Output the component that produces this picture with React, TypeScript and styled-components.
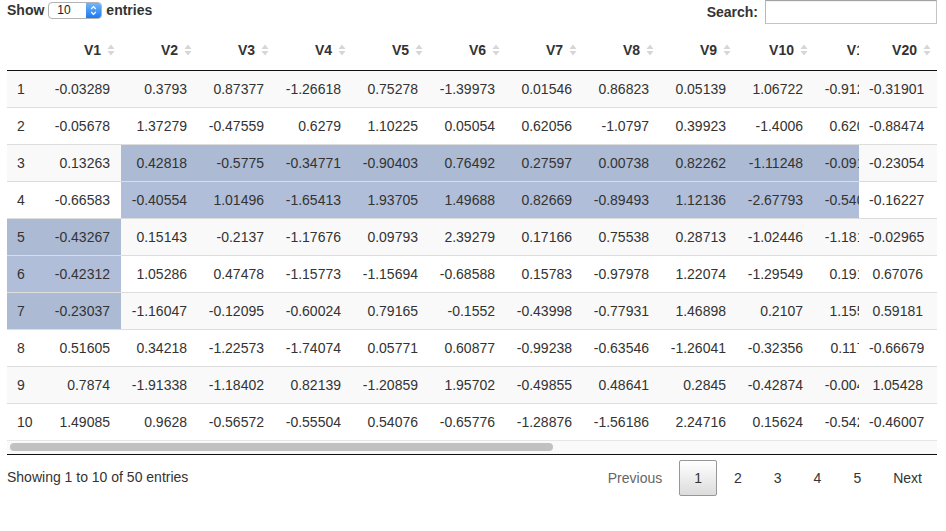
import React from "react";
import styled, { createGlobalStyle } from "styled-components";

const GlobalStyle = createGlobalStyle`
  html, body { margin: 0; padding: 0; background: #fff; }
  body {
    font-family: "Liberation Sans", Arial, Helvetica, sans-serif;
    font-size: 14px;
    line-height: 20px;
    color: #333;
  }
  * { box-sizing: border-box; }
`;

const Page = styled.div`
  width: 946px;
  padding: 0 9px 0 7px;
`;

const Controls = styled.div`
  display: flex;
  justify-content: space-between;
  align-items: flex-start;
  height: 24px;
  margin-bottom: 6px;
`;

const LengthLabel = styled.label`
  display: flex;
  align-items: center;
  gap: 4px;
  height: 20px;
  font-weight: bold;
`;

const SelectBox = styled.div`
  display: flex;
  width: 54px;
  height: 17px;
  border: 1px solid #b3b3b3;
  border-radius: 4px;
  overflow: hidden;
  background: #fff;
  font-weight: normal;
  font-size: 12px;
  line-height: 15px;
  color: #222;
`;

const SelectValue = styled.span`
  flex: 1;
  padding-left: 8px;
`;

const SelectStepper = styled.span`
  width: 15px;
  display: flex;
  align-items: center;
  justify-content: center;
  background: linear-gradient(#72b6fb, #1e78ef);
`;

const SearchLabel = styled.label`
  display: flex;
  align-items: center;
  gap: 7px;
  font-weight: bold;
`;

const SearchInput = styled.input`
  width: 172px;
  height: 24px;
  margin: 0;
  border: 1px solid #c4c4c4;
  border-top-color: #a3a3a3;
  border-left-color: #b8b8b8;
  box-shadow: inset 0 1px 1px rgba(0, 0, 0, 0.06);
  background: #fff;
  outline: none;
  font: inherit;
`;

const ScrollWrap = styled.div`
  border-bottom: 1px solid #111;
`;

const Panes = styled.div`
  display: flex;
`;

const Viewport = styled.div`
  flex: 1;
  min-width: 0;
  overflow: hidden;
`;

const FixedPane = styled.div`
  flex: none;
  width: 78px;
  background: #fff;
`;

const Table = styled.table<{ $width: number }>`
  width: ${(p) => p.$width}px;
  table-layout: fixed;
  border-collapse: separate;
  border-spacing: 0;
  tbody tr:first-child > td {
    border-top: none;
  }
`;

const HeadCell = styled.th<{ $w: number }>`
  width: ${(p) => p.$w}px;
  padding: 10px 6px 10px 10px;
  border-bottom: 1px solid #111;
  font-weight: bold;
  white-space: nowrap;
  overflow: hidden;
  background: #fff;
`;

const HeadInner = styled.div`
  display: flex;
  justify-content: flex-end;
  align-items: center;
  gap: 6px;
`;

const Cell = styled.td<{ $sel: boolean; $odd: boolean; $left?: boolean; $padR: number }>`
  padding: 8px ${(p) => p.$padR}px 8px 10px;
  border-top: 1px solid #ddd;
  text-align: ${(p) => (p.$left ? "left" : "right")};
  white-space: nowrap;
  overflow: hidden;
  background: ${(p) =>
    p.$sel ? (p.$odd ? "#acbad4" : "#b0bed9") : p.$odd ? "#f9f9f9" : "#fff"};
`;

const Track = styled.div`
  height: 14px;
  border-top: 1px solid #e6e6e6;
  background: #fafafa;
  padding: 2px 0 0 3px;
`;

const Thumb = styled.div`
  width: 543px;
  height: 8px;
  border-radius: 4px;
  background: #c1c1c1;
`;

const Footer = styled.div`
  display: flex;
  justify-content: space-between;
  align-items: flex-start;
`;

const Info = styled.div`
  padding-top: 12px;
`;

const Pagination = styled.div`
  display: flex;
  padding-top: 5px;
`;

const PageButton = styled.span<{ $current?: boolean; $disabled?: boolean }>`
  display: inline-block;
  padding: 7px 14px;
  margin-left: 2px;
  border: 1px solid ${(p) => (p.$current ? "#979797" : "transparent")};
  border-radius: 2px;
  line-height: 20px;
  color: ${(p) => (p.$disabled ? "#666" : "#333")};
  background: ${(p) =>
    p.$current ? "linear-gradient(to bottom, #fff 0%, #dcdcdc 100%)" : "transparent"};
`;

const SortIcon = () => (
  <svg width="8" height="12" viewBox="0 0 8 12">
    <path d="M4 0.5 L7.5 5 H0.5 Z" fill="#d6d6d6" />
    <path d="M4 11.5 L0.5 7 H7.5 Z" fill="#d6d6d6" />
  </svg>
);

const Chevrons = () => (
  <svg width="7" height="11" viewBox="0 0 7 11">
    <path d="M1.2 4 L3.5 1.6 L5.8 4" stroke="#fff" strokeWidth="1.3" fill="none" />
    <path d="M1.2 7 L3.5 9.4 L5.8 7" stroke="#fff" strokeWidth="1.3" fill="none" />
  </svg>
);

const data: string[][] = [
  ["-0.03289", "0.3793", "0.87377", "-1.26618", "0.75278", "-1.39973", "0.01546", "0.86823", "0.05139", "1.06722", "-0.91247", "-0.31901"],
  ["-0.05678", "1.37279", "-0.47559", "0.6279", "1.10225", "0.05054", "0.62056", "-1.0797", "0.39923", "-1.4006", "0.62031", "-0.88474"],
  ["0.13263", "0.42818", "-0.5775", "-0.34771", "-0.90403", "0.76492", "0.27597", "0.00738", "0.82262", "-1.11248", "-0.09172", "-0.23054"],
  ["-0.66583", "-0.40554", "1.01496", "-1.65413", "1.93705", "1.49688", "0.82669", "-0.89493", "1.12136", "-2.67793", "-0.54012", "-0.16227"],
  ["-0.43267", "0.15143", "-0.2137", "-1.17676", "0.09793", "2.39279", "0.17166", "0.75538", "0.28713", "-1.02446", "-1.18126", "-0.02965"],
  ["-0.42312", "1.05286", "0.47478", "-1.15773", "-1.15694", "-0.68588", "0.15783", "-0.97978", "1.22074", "-1.29549", "0.19133", "0.67076"],
  ["-0.23037", "-1.16047", "-0.12095", "-0.60024", "0.79165", "-0.1552", "-0.43998", "-0.77931", "1.46898", "0.2107", "1.15524", "0.59181"],
  ["0.51605", "0.34218", "-1.22573", "-1.74074", "0.05771", "0.60877", "-0.99238", "-0.63546", "-1.26041", "-0.32356", "0.11741", "-0.66679"],
  ["0.7874", "-1.91338", "-1.18402", "0.82139", "-1.20859", "1.95702", "-0.49855", "0.48641", "0.2845", "-0.42874", "-0.00431", "1.05428"],
  ["1.49085", "0.9628", "-0.56572", "-0.55504", "0.54076", "-0.65776", "-1.28876", "-1.56186", "2.24716", "0.15624", "-0.54237", "-0.46007"],
];

const scrollCols = ["V1", "V2", "V3", "V4", "V5", "V6", "V7", "V8", "V9", "V10", "V11"];

// column index: 0 = row names, 1..11 = V1..V11
const isSelected = (row: number, col: number) => {
  if (row === 2 || row === 3) return col >= 2;
  if (row >= 4 && row <= 6) return col <= 1;
  return false;
};

export default function App() {
  const mainWidth = 37 + scrollCols.length * 77;
  return (
    <Page>
      <GlobalStyle />
      <Controls>
        <LengthLabel>
          Show
          <SelectBox>
            <SelectValue>10</SelectValue>
            <SelectStepper>
              <Chevrons />
            </SelectStepper>
          </SelectBox>
          entries
        </LengthLabel>
        <SearchLabel>
          Search:
          <SearchInput type="search" />
        </SearchLabel>
      </Controls>

      <ScrollWrap>
        <Panes>
          <Viewport>
            <Table $width={mainWidth}>
              <thead>
                <tr>
                  <HeadCell $w={37} />
                  {scrollCols.map((c) => (
                    <HeadCell key={c} $w={77}>
                      <HeadInner>
                        <span>{c}</span>
                        <SortIcon />
                      </HeadInner>
                    </HeadCell>
                  ))}
                </tr>
              </thead>
              <tbody>
                {data.map((row, r) => (
                  <tr key={r}>
                    <Cell $left $padR={10} $odd={r % 2 === 0} $sel={isSelected(r, 0)}>
                      {r + 1}
                    </Cell>
                    {row.slice(0, 11).map((v, c) => (
                      <Cell key={c} $padR={11} $odd={r % 2 === 0} $sel={isSelected(r, c + 1)}>
                        {v}
                      </Cell>
                    ))}
                  </tr>
                ))}
              </tbody>
            </Table>
          </Viewport>
          <FixedPane>
            <Table $width={78}>
              <thead>
                <tr>
                  <HeadCell $w={78}>
                    <HeadInner>
                      <span>V20</span>
                      <SortIcon />
                    </HeadInner>
                  </HeadCell>
                </tr>
              </thead>
              <tbody>
                {data.map((row, r) => (
                  <tr key={r}>
                    <Cell $padR={14} $odd={r % 2 === 0} $sel={false}>
                      {row[11]}
                    </Cell>
                  </tr>
                ))}
              </tbody>
            </Table>
          </FixedPane>
        </Panes>
        <Track>
          <Thumb />
        </Track>
      </ScrollWrap>

      <Footer>
        <Info>Showing 1 to 10 of 50 entries</Info>
        <Pagination>
          <PageButton $disabled>Previous</PageButton>
          <PageButton $current>1</PageButton>
          <PageButton>2</PageButton>
          <PageButton>3</PageButton>
          <PageButton>4</PageButton>
          <PageButton>5</PageButton>
          <PageButton>Next</PageButton>
        </Pagination>
      </Footer>
    </Page>
  );
}
